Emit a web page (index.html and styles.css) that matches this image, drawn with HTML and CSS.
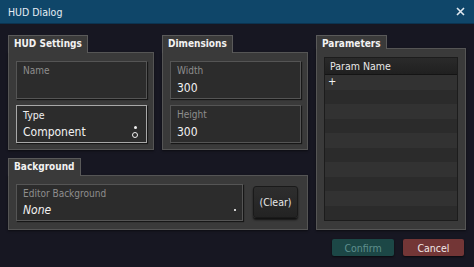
FILE: index.html
```
<!DOCTYPE html>
<html>
<head>
<meta charset="utf-8">
<link rel="stylesheet" href="styles.css">
</head>
<body>
<div class="titlebar">
  <span class="title">HUD Dialog</span>
  <svg class="close" width="9" height="9" viewBox="0 0 9 9"><path d="M1 1L8 8M8 1L1 8" stroke="#dfe8ef" stroke-width="1.6" fill="none"/></svg>
</div>
<div class="content">
  <div class="grid">
    <div class="group g-hud">
      <div class="tab">HUD Settings</div>
      <div class="box stack">
        <div class="field">
          <div class="fcol"><div class="label">Name</div><div class="value"></div></div>
        </div>
        <div class="field focus">
          <div class="fcol"><div class="label light">Type</div><div class="value">Component</div></div>
          <div class="selicon"><span class="dot"></span><span class="ring"></span></div>
        </div>
      </div>
    </div>
    <div class="group g-dim">
      <div class="tab">Dimensions</div>
      <div class="box stack">
        <div class="field">
          <div class="fcol"><div class="label">Width</div><div class="value">300</div></div>
        </div>
        <div class="field">
          <div class="fcol"><div class="label">Height</div><div class="value">300</div></div>
        </div>
      </div>
    </div>
    <div class="group g-par">
      <div class="tab">Parameters</div>
      <div class="box pbox">
        <div class="table">
          <div class="thead">Param Name</div>
          <div class="row">+</div>
          <div class="row"></div>
          <div class="row"></div>
          <div class="row"></div>
          <div class="row"></div>
          <div class="row"></div>
          <div class="row"></div>
          <div class="row"></div>
          <div class="row"></div>
          <div class="row"></div>
        </div>
      </div>
    </div>
    <div class="group g-bg">
      <div class="tab">Background</div>
      <div class="box bgrow">
        <div class="field wide">
          <div class="fcol"><div class="label">Editor Background</div><div class="value italic">None</div></div>
          <span class="tinydot"></span>
        </div>
        <button class="clear">(Clear)</button>
      </div>
    </div>
  </div>
  <div class="actions">
    <button class="btn confirm">Confirm</button>
    <button class="btn cancel">Cancel</button>
  </div>
</div>
</body>
</html>
```
FILE: styles.css
```
* { box-sizing: border-box; }
html, body { margin: 0; padding: 0; }
body {
  width: 474px;
  height: 267px;
  background: #171722;
  font-family: "DejaVu Sans Condensed", "DejaVu Sans", sans-serif;
  color: #e8e8e8;
  overflow: hidden;
}
.titlebar {
  height: 24px;
  background: #0f4669;
  display: flex;
  align-items: center;
  justify-content: space-between;
  padding: 0 9px 0 8px;
  border-bottom: 1px solid #0b3350;
}
.title { font-size: 10.5px; color: #e6eef4; }
.close { display: block; }
.content { padding: 11px 8px 0 8px; }
.grid {
  display: grid;
  grid-template-columns: 146px 146px 150px;
  grid-template-rows: 115px 72px;
  column-gap: 8px;
  row-gap: 8px;
}
.g-hud { grid-column: 1; grid-row: 1; }
.g-dim { grid-column: 2; grid-row: 1; }
.g-par { grid-column: 3; grid-row: 1 / span 2; }
.g-bg { grid-column: 1 / span 2; grid-row: 2; }
.group { display: flex; flex-direction: column; }
.tab {
  align-self: flex-start;
  height: 18px;
  padding: 2px 5px 0 5px;
  font-weight: bold;
  font-size: 10px;
  color: #f2f2f2;
  background: #3a3a3a;
  border: 1px solid #5a5a5a;
  border-bottom: none;
  position: relative;
  z-index: 1;
  margin-bottom: -1px;
}
.box {
  flex: 1;
  background: #3a3a3a;
  border: 1px solid #555;
  box-shadow: 0 1px 2px rgba(0,0,0,0.5);
}
.stack {
  display: flex;
  flex-direction: column;
  gap: 6px;
  padding: 8px 6px 6px 7px;
}
.field {
  height: 38px;
  background: #2c2c2c;
  border: 1px solid #555;
  box-shadow: 1px 1px 1px rgba(0,0,0,0.6);
  display: flex;
  align-items: flex-end;
  padding: 2px 6px 2px 6px;
}
.field.focus { border-color: #a8a8a8; }
.fcol {
  flex: 1;
  display: flex;
  flex-direction: column;
  justify-content: space-between;
  height: 100%;
}
.label { font-size: 10px; color: #8e8e8e; line-height: 14px; }
.label.light { color: #f0f0f0; font-size: 10.5px; }
.value { font-size: 12px; color: #f2f2f2; line-height: 16px; min-height: 16px; }
.italic { font-style: italic; }
.selicon {
  display: flex;
  flex-direction: column;
  align-items: center;
  gap: 3px;
  margin: 0 2px 2px 0;
}
.dot { width: 3px; height: 3px; border-radius: 50%; background: #f0f0f0; }
.ring { width: 6px; height: 6px; border-radius: 50%; border: 1.5px solid #f0f0f0; }
.pbox { padding: 8px 7px 8px 7px; display: flex; }
.table {
  flex: 1;
  border: 1px solid #1c1c1c;
  background: #2c2c2c;
  overflow: hidden;
}
.thead {
  height: 17px;
  font-size: 10.5px;
  line-height: 16px;
  color: #e8e8e8;
  padding-left: 5px;
  background: linear-gradient(#2a2a2a, #202020);
  border-bottom: 1px solid #141414;
}
.row {
  height: 14.5px;
  font-size: 11px;
  line-height: 14px;
  padding-left: 3px;
  color: #f0f0f0;
}
.row:nth-child(odd) { background: #2b2b2b; }
.row:nth-child(even) { background: #323232; }
.bgrow {
  display: flex;
  align-items: center;
  gap: 10px;
  padding: 7px 9px 8px 7px;
}
.field.wide { flex: 1; height: 37px; align-items: flex-end; }
.tinydot { width: 2px; height: 2px; background: #cfcfcf; margin: 0 0 7px 0; }
.clear {
  width: 45px;
  height: 32px;
  background: linear-gradient(#2e2e2e, #232323);
  border: 1px solid #1a1a1a;
  border-radius: 3px;
  box-shadow: 0 2px 2px rgba(0,0,0,0.7);
  color: #e8e8e8;
  font-family: inherit;
  font-size: 10.5px;
  padding: 0;
}
.actions {
  display: flex;
  justify-content: flex-end;
  gap: 9px;
  padding: 9px 2px 0 0;
}
.btn {
  height: 17px;
  width: 62px;
  border: none;
  border-radius: 2px;
  font-family: inherit;
  font-size: 10.5px;
  padding: 0;
  box-shadow: 0 1px 2px rgba(0,0,0,0.6);
}
.confirm { background: #1c4746; color: #5f8f8d; }
.cancel { background: #733636; color: #f0e8e8; width: 61px; }
```
